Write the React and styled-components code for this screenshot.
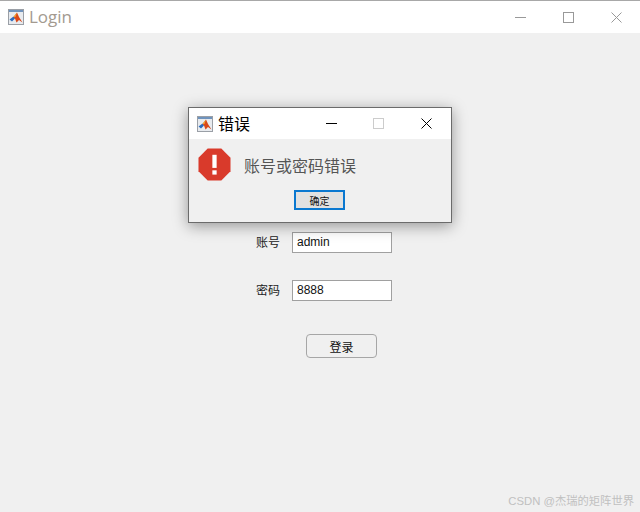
import React from "react";
import styled, { createGlobalStyle } from "styled-components";

const Global = createGlobalStyle`
  html, body { margin: 0; padding: 0; width: 640px; height: 512px; overflow: hidden; background: #f0f0f0; }
  * { box-sizing: border-box; }
`;
const Page = styled.div`
  position: relative; width: 640px; height: 512px; background: #f0f0f0;
  border-top: 1px solid #a8a8a8;
  font-family: "Liberation Sans", "Noto Sans CJK SC", sans-serif;
  display: flex; flex-direction: column;
`;
const TitleBar = styled.div`
  height: 32px; background: #fff; display: flex; align-items: center; flex: none;
  padding-left: 8px;
`;
const AppTitle = styled.div`
  font-family: "Open Sans", "Noto Sans", sans-serif;
  font-size: 17px; color: #a39a90; margin-left: 5px; line-height: 20px; margin-top: -1px;
`;
const Controls = styled.div`
  margin-left: auto; display: flex; align-items: center;
`;
const Ctl = styled.div`
  width: 48px; height: 32px; display: flex; align-items: center; justify-content: center;
`;
const Form = styled.div`
  padding: 199px 0 0 256px; display: flex; flex-direction: column;
`;
const Row = styled.div`
  display: flex; align-items: center; height: 21px; margin-bottom: 27px;
`;
const Label = styled.span`
  width: 36px; font-size: 12px; color: #222; font-family: "Noto Sans CJK SC", sans-serif; line-height: 19px; height: 21px; flex: none;
`;
const Field = styled.div`
  width: 100px; height: 21px; background: #fff; border: 1px solid #a0a0a0;
  font-size: 12px; color: #111; padding-left: 4px; line-height: 19px;
`;
const LoginButton = styled.div`
  width: 71px; height: 24px; margin: 6px 0 0 50px; border: 1px solid #a6a6a6; border-radius: 4px;
  background: #f0f0f0; font-size: 12px; color: #111; display: flex; align-items: center; justify-content: center;
  font-family: "Noto Sans CJK SC", sans-serif;
`;
const Dialog = styled.div`
  position: absolute; left: 188px; top: 106px; width: 264px; height: 116px;
  background: #f0f0f0; border: 1px solid #6b6b6b;
  box-shadow: 0 3px 14px rgba(0,0,0,.38);
  display: flex; flex-direction: column;
`;
const DialogBar = styled.div`
  height: 31px; background: #fff; display: flex; align-items: center; padding-left: 8px; flex: none;
`;
const DialogTitle = styled.div`
  font-family: "Noto Sans CJK SC", sans-serif; font-size: 16px; color: #000; margin-left: 5px; line-height: 20px; margin-top: -1px;
`;
const DialogControls = styled.div`
  margin-left: auto; display: flex; align-items: center; padding-right: 1px;
`;
const DCtl = styled.div`
  width: 47.5px; height: 31px; display: flex; align-items: center; justify-content: center;
`;
const Message = styled.div`
  display: flex; align-items: center; padding: 0 0 0 9px; height: 51px;
`;
const MessageText = styled.div`
  font-family: "Noto Sans CJK SC", sans-serif; font-size: 16px; color: #555; margin-left: 13px;
`;
const OkButton = styled.div`
  width: 51px; height: 20px; margin: 0 0 0 105px; border: 2px solid #0a78d0; background: #e1e1e1;
  font-family: "Noto Sans CJK SC", sans-serif; font-size: 10px; color: #111; display: flex; align-items: center; justify-content: center;
`;
const Watermark = styled.div`
  position: absolute; right: 6px; bottom: 3px; font-family: "Liberation Sans", "Noto Sans CJK SC", sans-serif;
  font-size: 11.3px; color: #c0c0c0; line-height: 16px;
`;

const MatlabIcon = () => (
  <svg width="16" height="16" viewBox="0 0 16 16">
    <rect x="0.5" y="0.5" width="15" height="15" fill="#e8ebef" stroke="#9a9fa6" />
    <rect x="1" y="1" width="14" height="2" fill="#6f93bd" />
    <path d="M1.5 10.5 L5.5 7.5 L7 9.5 L4 12.5 Z" fill="#2a6cc0" />
    <path d="M5.5 8 L9 3.5 L11 8 L14.5 13.5 L11 11 L8.5 13.5 L7 9.5 Z" fill="#d9481a" />
    <path d="M9 3.5 L7.5 8 L5.5 8 Z" fill="#f0a830" />
  </svg>
);

const StopIcon = () => (
  <svg width="33" height="33" viewBox="0 0 34 34">
    <path d="M10 0.5 H24 L33.5 10 V24 L24 33.5 H10 L0.5 24 V10 Z" fill="#d93a2b" />
    <rect x="14.8" y="7" width="4.4" height="13.5" fill="#fff" />
    <rect x="14.8" y="23" width="4.4" height="4.4" fill="#fff" />
  </svg>
);

const MinIcon = ({ c }) => <svg width="11" height="11" viewBox="0 0 11 11"><path d="M0 5.5H11" stroke={c} /></svg>;
const MaxIcon = ({ c }) => <svg width="11" height="11" viewBox="0 0 11 11"><rect x="0.5" y="0.5" width="10" height="10" fill="none" stroke={c} /></svg>;
const CloseIcon = ({ c }) => <svg width="11" height="11" viewBox="0 0 11 11"><path d="M0.5 0.5L10.5 10.5M10.5 0.5L0.5 10.5" stroke={c} /></svg>;

export default function App() {
  return (
    <Page>
      <Global />
      <TitleBar>
        <MatlabIcon />
        <AppTitle>Login</AppTitle>
        <Controls>
          <Ctl><MinIcon c="#999" /></Ctl>
          <Ctl><MaxIcon c="#999" /></Ctl>
          <Ctl><CloseIcon c="#999" /></Ctl>
        </Controls>
      </TitleBar>
      <Form>
        <Row><Label>账号</Label><Field>admin</Field></Row>
        <Row><Label>密码</Label><Field>8888</Field></Row>
        <LoginButton>登录</LoginButton>
      </Form>
      <Dialog>
        <DialogBar>
          <MatlabIcon />
          <DialogTitle>错误</DialogTitle>
          <DialogControls>
            <DCtl><MinIcon c="#000" /></DCtl>
            <DCtl><MaxIcon c="#ccc" /></DCtl>
            <DCtl><CloseIcon c="#000" /></DCtl>
          </DialogControls>
        </DialogBar>
        <Message>
          <StopIcon />
          <MessageText>账号或密码错误</MessageText>
        </Message>
        <OkButton>确定</OkButton>
      </Dialog>
      <Watermark>CSDN @杰瑞的矩阵世界</Watermark>
    </Page>
  );
}
